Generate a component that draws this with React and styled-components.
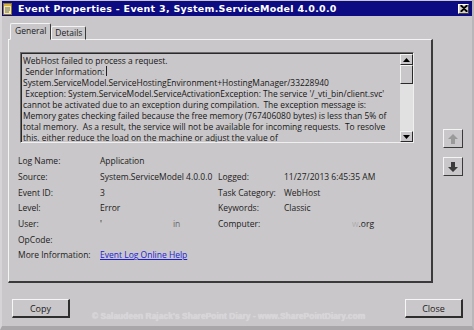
import React from "react";
import styled, { createGlobalStyle } from "styled-components";

const GlobalStyle = createGlobalStyle`
  html, body {
    margin: 0;
    padding: 0;
    background: #c9c7c9;
  }
  * {
    box-sizing: border-box;
  }
`;

const textLines = [
  "WebHost failed to process a request.",
  " Sender Information: ",
  "System.ServiceModel.ServiceHostingEnvironment+HostingManager/33228940",
  " Exception: System.ServiceModel.ServiceActivationException: The service '/_vti_bin/client.svc'",
  "cannot be activated due to an exception during compilation.  The exception message is:",
  "Memory gates checking failed because the free memory (767406080 bytes) is less than 5% of",
  "total memory.  As a result, the service will not be available for incoming requests.  To resolve",
  "this. either reduce the load on the machine or adjust the value of",
];

export default function App() {
  return (
    <>
      <GlobalStyle />
      <Window>
        <TitleBar>
          <TitleLeft>
            <AppIcon />
            <Title>Event Properties - Event 3, System.ServiceModel 4.0.0.0</Title>
          </TitleLeft>
          <CloseBox>
            <svg width="8" height="7" viewBox="0 0 8 7">
              <path d="M1 0 L4 3 L7 0 M1 7 L4 4 L7 7 M0.5 0.5 L7.5 6.5 M7.5 0.5 L0.5 6.5" stroke="#000" strokeWidth="1.4" fill="none" />
            </svg>
          </CloseBox>
        </TitleBar>

        <Body>
          <TabArea>
            <TabRow>
              <Tab active>General</Tab>
              <Tab>Details</Tab>
            </TabRow>
            <Panel>
              <TextBox>
                <TextContent>
                  {textLines.map((line, i) => (
                    <Line key={i}>
                      {line}
                      {i === 1 && <Caret />}
                    </Line>
                  ))}
                </TextContent>
                <ScrollBar>
                  <ScrollButton>
                    <Arrow up />
                  </ScrollButton>
                  <Thumb />
                  <Track />
                  <ScrollButton>
                    <Arrow />
                  </ScrollButton>
                </ScrollBar>
              </TextBox>

              <Fields>
                <Label>Log Name:</Label>
                <Value wide>Application</Value>
                <Label>Source:</Label>
                <Value>System.ServiceModel 4.0.0.0</Value>
                <Label>Logged:</Label>
                <Value>11/27/2013 6:45:35 AM</Value>
                <Label>Event ID:</Label>
                <Value>3</Value>
                <Label>Task Category:</Label>
                <Value>WebHost</Value>
                <Label>Level:</Label>
                <Value>Error</Value>
                <Label>Keywords:</Label>
                <Value>Classic</Value>
                <Label>User:</Label>
                <Value>
                  <span>'</span>
                  <Faded gap={71}>in</Faded>
                </Value>
                <Label>Computer:</Label>
                <Value>
                  <Faded gap={68} light>w</Faded>.org
                </Value>
                <Label>OpCode:</Label>
                <Value wide />
                <Label>More Information:</Label>
                <Value wide>
                  <HelpLink>Event Log Online Help</HelpLink>
                </Value>
              </Fields>
            </Panel>
          </TabArea>

          <SideButtons>
            <NavButton>
              <NavArrow up />
            </NavButton>
            <NavButton>
              <NavArrow />
            </NavButton>
          </SideButtons>
        </Body>

        <Footer>
          <PushButton>Copy</PushButton>
          <PushButton>Close</PushButton>
          <Watermark>© Salaudeen Rajack's SharePoint Diary - www.SharePointDiary.com</Watermark>
        </Footer>
      </Window>
    </>
  );
}

function AppIcon() {
  return (
    <svg width="9" height="12" viewBox="0 0 9 12">
      <rect x="0.5" y="0.5" width="8" height="11" fill="#f4e9a8" stroke="#8a7a30" />
      <rect x="1" y="1" width="7" height="2" fill="#d9b23a" />
      <path d="M2 5 H7 M2 7 H7 M2 9 H6" stroke="#6a6a6a" strokeWidth="1" />
    </svg>
  );
}

function Arrow({ up }) {
  return (
    <svg width="7" height="4" viewBox="0 0 7 4">
      <path d={up ? "M0 4 L3.5 0 L7 4 Z" : "M0 0 L3.5 4 L7 0 Z"} fill="#000" />
    </svg>
  );
}

function NavArrow({ up }) {
  return (
    <svg width="10" height="10" viewBox="0 0 10 10">
      <path
        d={up ? "M5 0 L10 5 L7 5 L7 10 L3 10 L3 5 L0 5 Z" : "M5 10 L10 5 L7 5 L7 0 L3 0 L3 5 L0 5 Z"}
        fill={up ? "#9a9a9a" : "#3a3a3a"}
      />
    </svg>
  );
}

const Window = styled.div`
  width: 474px;
  height: 330px;
  background: #c9c7c9;
  border-left: 2px solid #d6d4d6;
  border-right: 2px solid #b8b6b8;
  border-bottom: 4px solid #a9a7a9;
  padding-top: 1px;
  display: flex;
  flex-direction: column;
  position: relative;
  font-family: "Open Sans", "Liberation Sans", sans-serif;
  color: #1c1c1c;
`;

const TitleBar = styled.div`
  height: 15px;
  background: #0c0b82;
  display: flex;
  align-items: center;
  justify-content: space-between;
  padding: 0 3px 0 1px;
`;

const TitleLeft = styled.div`
  display: flex;
  align-items: center;
  gap: 6px;
`;

const Title = styled.span`
  color: #ffffff;
  font-family: "DejaVu Sans", "Liberation Sans", sans-serif;
  font-weight: 700;
  font-size: 9.5px;
  letter-spacing: 0.28px;
  white-space: nowrap;
`;

const CloseBox = styled.div`
  width: 11px;
  height: 10px;
  background: #d4d0c8;
  border-top: 1px solid #ffffff;
  border-left: 1px solid #ffffff;
  border-right: 1px solid #404040;
  border-bottom: 1px solid #404040;
  display: flex;
  align-items: center;
  justify-content: center;
`;

const Body = styled.div`
  display: flex;
  padding: 7px 0 0 6px;
  gap: 10px;
`;

const TabArea = styled.div`
  display: flex;
  flex-direction: column;
  width: 425px;
`;

const TabRow = styled.div`
  display: flex;
  align-items: flex-end;
  padding-left: 2px;
  height: 17px;
  margin-bottom: -1px;
  position: relative;
  z-index: 1;
`;

const Tab = styled.div`
  height: ${(p) => (p.active ? 17 : 14)}px;
  padding: 0 ${(p) => (p.active ? 4 : 3)}px 2px;
  display: flex;
  align-items: center;
  font-size: 8.5px;
  background: #c9c7c9;
  border-top: 1px solid #f4f4f4;
  border-left: 1px solid #f4f4f4;
  border-right: 1px solid #3a3a3a;
  border-bottom: ${(p) => (p.active ? "1px solid #c9c7c9" : "1px solid #f4f4f4")};
  border-radius: 2px 2px 0 0;
`;

const Panel = styled.div`
  height: 244px;
  border-top: 1px solid #f4f4f4;
  border-left: 1px solid #f4f4f4;
  border-right: 2px solid #3a3a3a;
  border-bottom: 2px solid #3a3a3a;
  padding: 12px 17px 0 11px;
  display: flex;
  flex-direction: column;
`;

const TextBox = styled.div`
  height: 91px;
  display: flex;
  border-top: 1px solid #6c6a6c;
  border-left: 1px solid #6c6a6c;
  border-right: 1px solid #efefef;
  border-bottom: 1px solid #efefef;
  box-shadow: inset 1px 1px 0 #2a2a2a;
  overflow: hidden;
`;

const TextContent = styled.div`
  flex: 1;
  overflow: hidden;
  padding: 2px 0 0 2px;
`;

const Line = styled.div`
  font-size: 8.45px;
  line-height: 11px;
  white-space: pre;
  color: #161616;
`;

const Caret = styled.span`
  display: inline-block;
  width: 1px;
  height: 10px;
  background: #222;
  vertical-align: -1px;
`;

const ScrollBar = styled.div`
  width: 13px;
  display: flex;
  flex-direction: column;
  padding-top: 1px;
`;

const ScrollButton = styled.div`
  height: 11px;
  background: #c9c7c9;
  border-top: 1px solid #f4f4f4;
  border-left: 1px solid #f4f4f4;
  border-right: 1px solid #2a2a2a;
  border-bottom: 1px solid #2a2a2a;
  display: flex;
  align-items: center;
  justify-content: center;
  flex-shrink: 0;
`;

const Thumb = styled.div`
  height: 19px;
  background: #c9c7c9;
  border-top: 1px solid #f4f4f4;
  border-left: 1px solid #f4f4f4;
  border-right: 1px solid #2a2a2a;
  border-bottom: 1px solid #2a2a2a;
  flex-shrink: 0;
`;

const Track = styled.div`
  flex: 1;
  background: #e2e1e2;
`;

const Fields = styled.div`
  display: grid;
  grid-template-columns: 82px 118px 66px 1fr;
  grid-auto-rows: 15.7px;
  margin-top: 10px;
  margin-left: -2px;
  font-size: 8.5px;
  align-items: center;
`;

const Label = styled.div`
  white-space: nowrap;
  color: #1c1c1c;
`;

const Value = styled.div`
  white-space: nowrap;
  grid-column: ${(p) => (p.wide ? "span 3" : "auto")};
  color: #1c1c1c;
  display: flex;
  align-items: baseline;
`;

const Faded = styled.span`
  margin-left: ${(p) => p.gap}px;
  color: ${(p) => (p.light ? "#b0aeb0" : "#6a686a")};
`;

const HelpLink = styled.a`
  color: #1c1cd8;
  text-decoration: underline;
  cursor: pointer;
`;

const SideButtons = styled.div`
  display: flex;
  flex-direction: column;
  gap: 9px;
  padding-top: 106px;
`;

const NavButton = styled.div`
  width: 20px;
  height: 19px;
  background: #c9c7c9;
  border-top: 1px solid #f4f4f4;
  border-left: 1px solid #f4f4f4;
  border-right: 1px solid #3a3a3a;
  border-bottom: 1px solid #3a3a3a;
  display: flex;
  align-items: center;
  justify-content: center;
`;

const Footer = styled.div`
  display: flex;
  justify-content: space-between;
  padding: 16px 9px 0 10px;
  position: relative;
`;

const PushButton = styled.div`
  width: 58px;
  height: 19px;
  background: #c9c7c9;
  border-top: 1px solid #f6f6f6;
  border-left: 1px solid #f6f6f6;
  border-right: 2px solid #2e2e2e;
  border-bottom: 2px solid #2e2e2e;
  display: flex;
  align-items: center;
  justify-content: center;
  font-size: 9px;
  color: #1c1c1c;
`;

const Watermark = styled.div`
  position: absolute;
  left: 90px;
  top: 28px;
  font-family: "Liberation Sans", sans-serif;
  font-weight: 700;
  font-size: 8.5px;
  color: rgba(214, 212, 216, 0.85);
  text-shadow: 0 0 1px rgba(255, 255, 255, 0.5);
  white-space: nowrap;
  pointer-events: none;
`;
